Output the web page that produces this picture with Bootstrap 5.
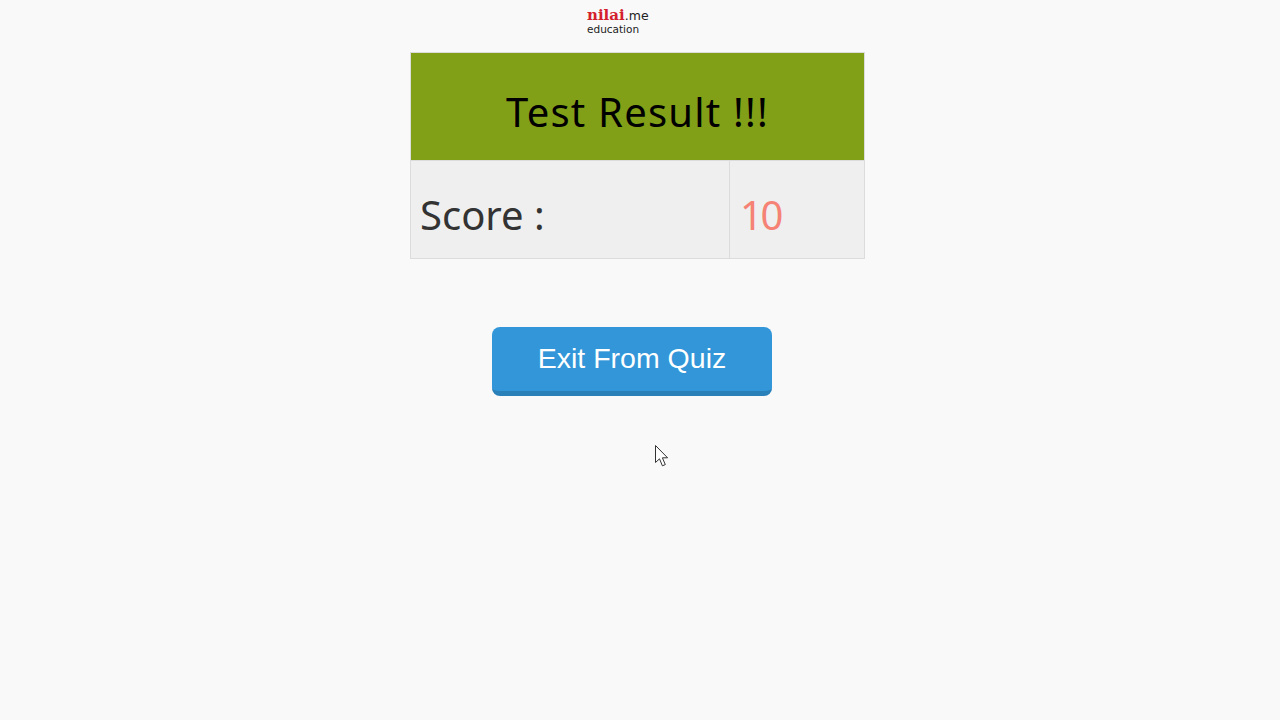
<!DOCTYPE html>
<html lang="en">
<head>
<meta charset="utf-8">
<title>Test Result</title>
<link href="https://cdn.jsdelivr.net/npm/bootstrap@5.3.0/dist/css/bootstrap.min.css" rel="stylesheet">
<style>
html, body { height: 100%; }
body { background: #f9f9f9; overflow: hidden; }
.quiz-wrap { width: 460px; margin: 0 auto; }
.logo-box { margin-left: 177px; height: 52px; padding-top: 8px; line-height: 1; }
.logo-top { font-family: "DejaVu Sans", sans-serif; font-size: 12.5px; line-height: 15px; height: 15px; color: #222; }
.logo-red { font-family: "DejaVu Serif", serif; font-weight: 700; font-size: 15px; color: #d3202c; }
.logo-sub { font-family: "DejaVu Sans", sans-serif; font-size: 10.5px; line-height: 13px; color: #222; }
.result-tbl { width: 455px; border-collapse: collapse; table-layout: fixed; font-family: "Noto Sans", sans-serif; }
.result-tbl th, .result-tbl td { border: 1px solid #dcdcdc; }
.col-label { width: 319px; }
.head-cell { height: 108px; background: #829f18; color: #000; font-size: 40px; font-weight: 400; letter-spacing: 1.2px; text-align: center; padding-top: 11px; }
.score-cell { height: 98px; background: #efefef; font-size: 40px; padding: 10px 0 0 9px; color: #333; }
.value-cell { color: #f58274; padding-left: 10px; letter-spacing: -2.5px; }
.exit-btn { display: block; width: 280px; height: 69px; margin: 68px 0 0 82px; padding: 0 0 2px; background: #3296d8; border: 0; border-bottom: 5px solid #2a80b9; border-radius: 8px; color: #fff; font-family: "Liberation Sans", sans-serif; font-size: 28.5px; }
.exit-btn:hover { background: #3296d8; color: #fff; border-bottom-color: #2a80b9; }
.cursor-mark { position: absolute; left: 654px; top: 444px; width: 16px; height: 24px; }
</style>
</head>
<body>
<div class="quiz-wrap">
  <div class="logo-box">
    <div class="logo-top"><span class="logo-red">nilai</span>.me</div>
    <div class="logo-sub">education</div>
  </div>
  <table class="result-tbl">
    <colgroup><col class="col-label"><col></colgroup>
    <thead>
      <tr><th colspan="2" class="head-cell">Test Result !!!</th></tr>
    </thead>
    <tbody>
      <tr>
        <td class="score-cell">Score :</td>
        <td class="score-cell value-cell">10</td>
      </tr>
    </tbody>
  </table>
  <button type="button" class="btn exit-btn">Exit From Quiz</button>
</div>
<svg class="cursor-mark" viewBox="0 0 16 24" aria-hidden="true">
  <path d="M1.5 1.5V18.5L5.5 14.8L8.4 21.8L11.3 20.6L8.4 13.8H13.6Z" fill="#fff" stroke="#333" stroke-width="1" stroke-linejoin="round"/>
</svg>
<script src="https://cdn.jsdelivr.net/npm/bootstrap@5.3.0/dist/js/bootstrap.bundle.min.js"></script>
</body>
</html>
